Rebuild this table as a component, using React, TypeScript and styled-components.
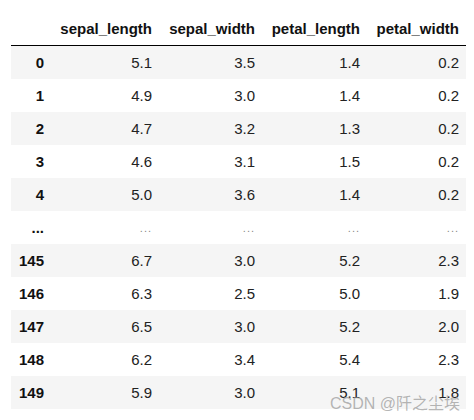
import React from 'react';
import styled, { createGlobalStyle } from 'styled-components';

const GlobalStyle = createGlobalStyle`
	html, body {
		margin: 0;
		padding: 0;
		background: #ffffff;
	}
	body {
		font-family: 'Liberation Sans', Arial, sans-serif;
		color: #000000;
	}
`;

type Row = [string, string, string, string, string];

const head = ['sepal_length', 'sepal_width', 'petal_length', 'petal_width'];
const widths = [41, 107, 103, 105, 99];

const top: Row[] = [
	['0', '5.1', '3.5', '1.4', '0.2'],
	['1', '4.9', '3.0', '1.4', '0.2'],
	['2', '4.7', '3.2', '1.3', '0.2'],
	['3', '4.6', '3.1', '1.5', '0.2'],
	['4', '5.0', '3.6', '1.4', '0.2'],
];

const bottom: Row[] = [
	['145', '6.7', '3.0', '5.2', '2.3'],
	['146', '6.3', '2.5', '5.0', '1.9'],
	['147', '6.5', '3.0', '5.2', '2.0'],
	['148', '6.2', '3.4', '5.4', '2.3'],
	['149', '5.9', '3.0', '5.1', '1.8'],
];

const App = () => {
	const renderRow = (r: Row) => (
		<tr key={r[0]}>
			<IndexCell>{r[0]}</IndexCell>
			{r.slice(1).map((v, i) => (
				<Cell key={i}>{v}</Cell>
			))}
		</tr>
	);

	return (
		<Page>
			<GlobalStyle />
			<Frame>
				<Table>
					<colgroup>
						{widths.map((w, i) => (
							<col key={i} style={{ width: w }} />
						))}
					</colgroup>
					<thead>
						<tr>
							<HeadCell />
							{head.map((h) => (
								<HeadCell key={h}>{h}</HeadCell>
							))}
						</tr>
					</thead>
					<tbody>
						{top.map(renderRow)}
						<tr>
							<IndexCell>...</IndexCell>
							{head.map((h) => (
								<Ellipsis key={h}>...</Ellipsis>
							))}
						</tr>
						{bottom.map(renderRow)}
					</tbody>
				</Table>
				<Watermark>CSDN @阡之尘埃</Watermark>
			</Frame>
		</Page>
	);
};

const Page = styled.div`
	min-height: 420px;
	box-sizing: border-box;
	padding: 12px 8px 0 11px;
`;

const Frame = styled.div`
	position: relative;
	width: 455px;
`;

const Table = styled.table`
	border-collapse: collapse;
	border-spacing: 0;
	table-layout: fixed;
	width: 455px;
	font-size: 15px;

	tbody tr:nth-child(odd) {
		background: #f5f5f5;
	}
`;

const HeadCell = styled.th`
	height: 33px;
	padding: 0 7px;
	text-align: right;
	font-weight: bold;
	vertical-align: middle;
	border-bottom: 1px solid #000000;
	white-space: nowrap;
	color: #111111;
`;

const IndexCell = styled.th`
	height: 33px;
	padding: 0 8px 0 0;
	text-align: right;
	font-weight: bold;
	vertical-align: middle;
	color: #111111;
`;

const Cell = styled.td`
	height: 33px;
	padding: 0 7px;
	text-align: right;
	vertical-align: middle;
	color: #222222;
`;

const Ellipsis = styled(Cell)`
	font-size: 11px;
	color: #888888;
	letter-spacing: 1px;
`;

const Watermark = styled.div`
	position: absolute;
	right: 6px;
	bottom: -4px;
	font-family: 'Liberation Sans', 'Noto Sans CJK SC', sans-serif;
	font-size: 16px;
	line-height: 18px;
	color: rgba(150, 150, 150, 0.7);
	pointer-events: none;
`;

export default App;
